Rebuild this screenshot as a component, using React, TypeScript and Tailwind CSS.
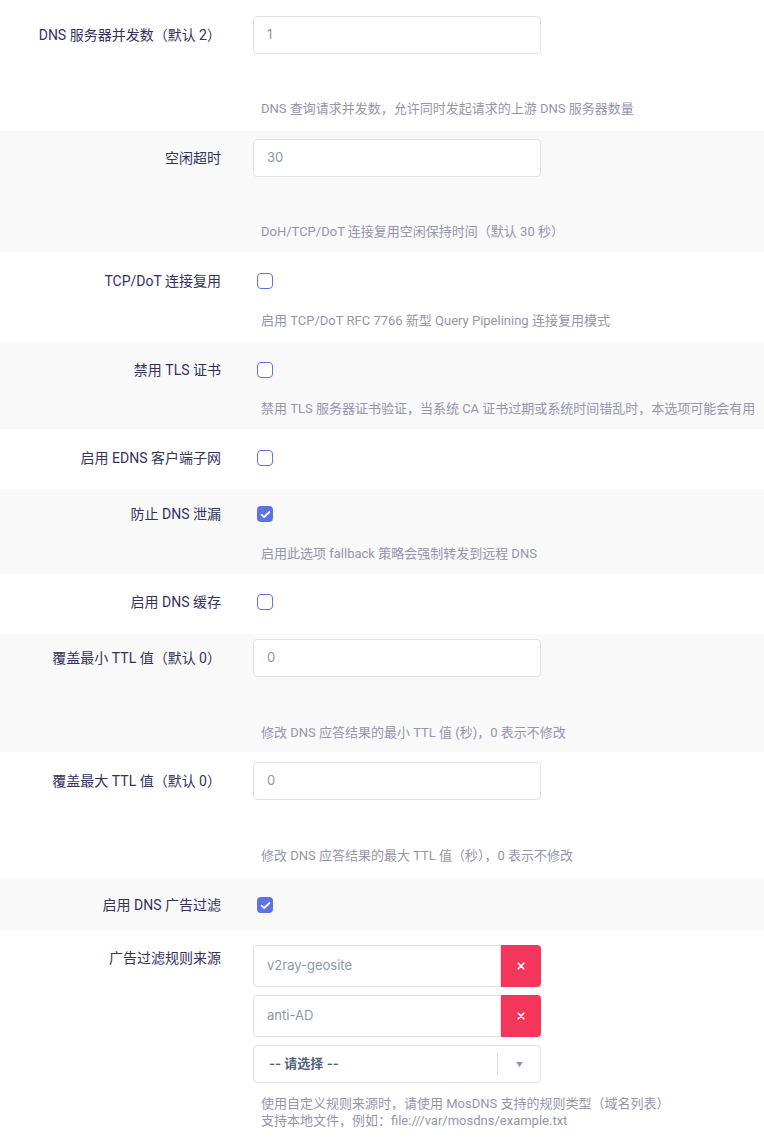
import * as React from "react";

const FONT = "font-['Inter','Noto_Sans_CJK_SC',sans-serif]";

function TextBox({ value }: { value: string }) {
  return (
    <div className="flex h-[38px] w-[288px] items-center rounded-[4px] border border-[#dee2e6] bg-white px-[13px] text-[13px] text-[#8898aa]">
      {value}
    </div>
  );
}

function Check({ checked }: { checked?: boolean }) {
  if (checked) {
    return (
      <span className="ml-1 flex size-4 items-center justify-center rounded-[4px] bg-[#5e72e4]">
        <svg viewBox="0 0 16 16" className="size-[11px]" fill="none">
          <path d="M2.5 8.5l3.5 3.2 7.5-7.2" stroke="white" strokeWidth="2.8" strokeLinecap="round" strokeLinejoin="round" />
        </svg>
      </span>
    );
  }
  return <span className="ml-1 block size-4 rounded-[4px] border border-[#5e72e4] bg-white" />;
}

function Desc({ children, className }: { children: React.ReactNode; className: string }) {
  return (
    <div className={`pl-2 font-['Roboto','Noto_Sans_CJK_SC',sans-serif] text-[13px] leading-[17px] text-[#9595ab] ${className}`}>
      {children}
    </div>
  );
}

function Label({ children }: { children: React.ReactNode }) {
  return (
    <div className="flex h-[38px] w-[221px] shrink-0 items-center justify-end font-['Roboto','Noto_Sans_CJK_SC',sans-serif] text-[14px] text-[#32325d]">
      {children}
    </div>
  );
}

function ListItem({ value }: { value: string }) {
  return (
    <div className="flex h-[42px] w-[288px]">
      <div className="flex flex-1 items-center rounded-l-[4px] border border-[#dee2e6] bg-white px-[13px] text-[13px] text-[#8898aa]">
        {value}
      </div>
      <button className="flex w-10 items-center justify-center rounded-r-[4px] bg-[#f5365c] text-white">
        <svg viewBox="0 0 10 10" className="size-[8px]">
          <path d="M1.5 1.5l7 7M8.5 1.5l-7 7" stroke="white" strokeWidth="2" strokeLinecap="round" />
        </svg>
      </button>
    </div>
  );
}

export default function App() {
  return (
    <div className={`w-[764px] bg-white ${FONT}`}>
      {/* DNS servers concurrency */}
      <div className="flex h-[131px] bg-white pt-4">
        <Label>DNS 服务器并发数（默认 2）</Label>
        <div className="ml-8">
          <TextBox value="1" />
          <Desc className="mt-[46px]">DNS 查询请求并发数，允许同时发起请求的上游 DNS 服务器数量</Desc>
        </div>
      </div>

      <div className="flex h-[121px] bg-[#f9f9f9] pt-2">
        <Label>空闲超时</Label>
        <div className="ml-8">
          <TextBox value="30" />
          <Desc className="mt-[46px]">DoH/TCP/DoT 连接复用空闲保持时间（默认 30 秒）</Desc>
        </div>
      </div>

      <div className="flex h-[91px] bg-white pt-[10px]">
        <Label>TCP/DoT 连接复用</Label>
        <div className="ml-8">
          <div className="flex h-[38px] items-center">
            <Check />
          </div>
          <Desc className="mt-3">启用 TCP/DoT RFC 7766 新型 Query Pipelining 连接复用模式</Desc>
        </div>
      </div>

      <div className="flex h-[86px] bg-[#f9f9f9] pt-2">
        <Label>禁用 TLS 证书</Label>
        <div className="ml-8">
          <div className="flex h-[38px] items-center">
            <Check />
          </div>
          <Desc className="mt-[11px]">禁用 TLS 服务器证书验证，当系统 CA 证书过期或系统时间错乱时，本选项可能会有用</Desc>
        </div>
      </div>

      <div className="flex h-[60px] bg-white pt-[10px]">
        <Label>启用 EDNS 客户端子网</Label>
        <div className="ml-8 flex h-[38px] items-center">
          <Check />
        </div>
      </div>

      <div className="flex h-[85px] bg-[#f9f9f9] pt-[6px]">
        <Label>防止 DNS 泄漏</Label>
        <div className="ml-8">
          <div className="flex h-[38px] items-center">
            <Check checked />
          </div>
          <Desc className="mt-3">启用此选项 fallback 策略会强制转发到远程 DNS</Desc>
        </div>
      </div>

      <div className="flex h-[60px] bg-white pt-[9px]">
        <Label>启用 DNS 缓存</Label>
        <div className="ml-8 flex h-[38px] items-center">
          <Check />
        </div>
      </div>

      <div className="flex h-[118px] bg-[#f9f9f9] pt-[5px]">
        <Label>覆盖最小 TTL 值（默认 0）</Label>
        <div className="ml-8">
          <TextBox value="0" />
          <Desc className="mt-[47px]">修改 DNS 应答结果的最小 TTL 值 (秒)，0 表示不修改</Desc>
        </div>
      </div>

      <div className="flex h-[127px] bg-white pt-[10px]">
        <Label>覆盖最大 TTL 值（默认 0）</Label>
        <div className="ml-8">
          <TextBox value="0" />
          <Desc className="mt-[47px]">修改 DNS 应答结果的最大 TTL 值（秒），0 表示不修改</Desc>
        </div>
      </div>

      <div className="flex h-[52px] bg-[#f9f9f9] pt-[7px]">
        <Label>启用 DNS 广告过滤</Label>
        <div className="ml-8 flex h-[38px] items-center">
          <Check checked />
        </div>
      </div>

      <div className="flex h-[209px] bg-white">
        <div className="pt-2">
          <Label>广告过滤规则来源</Label>
        </div>
        <div className="ml-8 flex flex-col gap-2 pt-[14px]">
          <ListItem value="v2ray-geosite" />
          <ListItem value="anti-AD" />
          <div className="flex h-[38px] w-[288px] items-center rounded-[4px] border border-[#dee2e6] bg-white">
            <span className="flex-1 pl-[15px] text-[13px] font-semibold text-[#525f7f]">-- 请选择 --</span>
            <span className="h-[22px] w-px bg-[#dee2e6]" />
            <span className="flex w-[42px] justify-center">
              <svg viewBox="0 0 8 6" className="h-[5px] w-[7px]">
                <path d="M0 0h8L4 6z" fill="#8898aa" />
              </svg>
            </span>
          </div>
          <Desc className="mt-1">
            使用自定义规则来源时，请使用 MosDNS 支持的规则类型（域名列表）
            <br />
            支持本地文件，例如：file:///var/mosdns/example.txt
          </Desc>
        </div>
      </div>
    </div>
  );
}
